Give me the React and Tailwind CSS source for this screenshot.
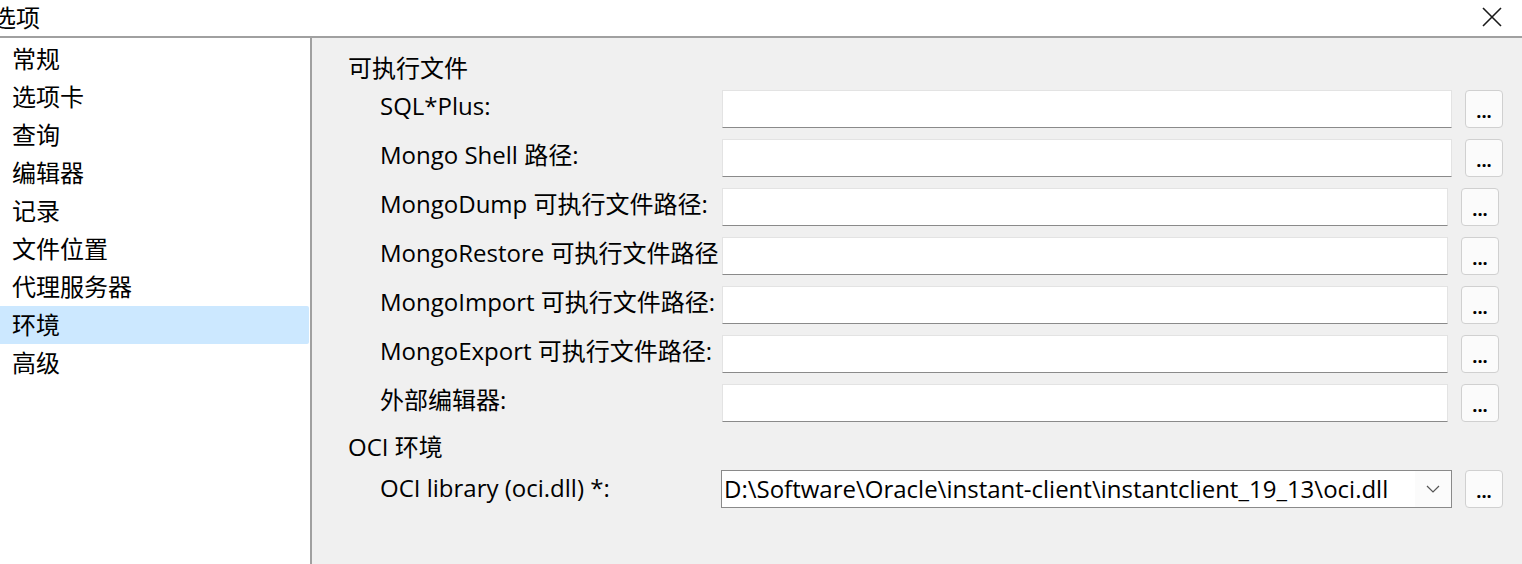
import { useState } from 'react';

const navItems = ['常规', '选项卡', '查询', '编辑器', '记录', '文件位置', '代理服务器', '环境', '高级'];

const execRows = [
  { label: 'SQL*Plus:', wide: true },
  { label: 'Mongo Shell 路径:', wide: true },
  { label: 'MongoDump 可执行文件路径:' },
  { label: 'MongoRestore 可执行文件路径' },
  { label: 'MongoImport 可执行文件路径:' },
  { label: 'MongoExport 可执行文件路径:' },
  { label: '外部编辑器:' },
];

function BrowseButton() {
  return (
    <button className="w-[38px] h-[38px] shrink-0 rounded-[4px] border border-[#d0d0d0] bg-[#fbfbfb] flex items-end justify-center pb-[7px] text-[18px] font-bold leading-none text-black">
      ...
    </button>
  );
}

function PathRow({ label, wide }) {
  return (
    <div className="flex items-center h-[49px]">
      <div className="w-[372px] pl-[30px] pb-[6px] shrink-0 whitespace-nowrap overflow-visible">{label}</div>
      <input
        type="text"
        className={`h-[38px] bg-white border border-[#e3e3e3] border-b-[#8a8a8a] outline-none ${wide ? 'w-[730px]' : 'w-[726px]'}`}
      />
      <div className="ml-[13px]">
        <BrowseButton />
      </div>
    </div>
  );
}

export default function App() {
  const [selected, setSelected] = useState('环境');

  return (
    <div className="w-[1522px] h-[564px] flex flex-col bg-white text-black text-[24px] overflow-hidden" style={{ fontFamily: '"Open Sans", "Noto Sans CJK SC", sans-serif' }}>
      <div className="h-[38px] shrink-0 flex items-center justify-between border-b-2 border-[#a0a0a0]">
        <span className="-ml-[8px] text-[24px] leading-none">选项</span>
        <svg width="22" height="22" viewBox="0 0 22 22" className="mr-[19px] mb-[2px]">
          <path d="M2 2 L20 20 M20 2 L2 20" stroke="#1a1a1a" strokeWidth="1.6" />
        </svg>
      </div>
      <div className="flex flex-1 min-h-0">
        <div className="w-[312px] shrink-0 border-r-2 border-[#a0a0a0] bg-white pt-[2px]">
          {navItems.map((item) => (
            <div
              key={item}
              onClick={() => setSelected(item)}
              className={`h-[38px] flex items-center pl-[12px] mr-[1px] rounded-r-[2px] ${selected === item ? 'bg-[#cce8ff]' : ''}`}
            >
              {item}
            </div>
          ))}
        </div>
        <div className="flex-1 bg-[#f0f0f0] pl-[38px] pt-[14px]">
          <div className="h-[32px] flex items-center -ml-[2px]">可执行文件</div>
          <div className="flex flex-col">
            {execRows.map((row) => (
              <PathRow key={row.label} {...row} />
            ))}
          </div>
          <div className="h-[40px] flex items-end pb-[2px] -ml-[2px]">OCI 环境</div>
          <div className="flex items-center h-[44px]">
            <div className="w-[371px] pl-[30px] pb-[3px] shrink-0 whitespace-nowrap">OCI library (oci.dll) *:</div>
            <div className="w-[731px] h-[38px] border border-[#8a8a8a] bg-white flex items-center">
              <span className="flex-1 pl-[2px] whitespace-nowrap overflow-hidden">D:\Software\Oracle\instant-client\instantclient_19_13\oci.dll</span>
              <div className="w-[36px] h-full bg-[#fbfbfb] flex items-center justify-center">
                <svg width="14" height="8" viewBox="0 0 14 8">
                  <path d="M1 1 L7 7 L13 1" stroke="#555" strokeWidth="1.2" fill="none" />
                </svg>
              </div>
            </div>
            <div className="ml-[13px]">
              <BrowseButton />
            </div>
          </div>
        </div>
      </div>
    </div>
  );
}
